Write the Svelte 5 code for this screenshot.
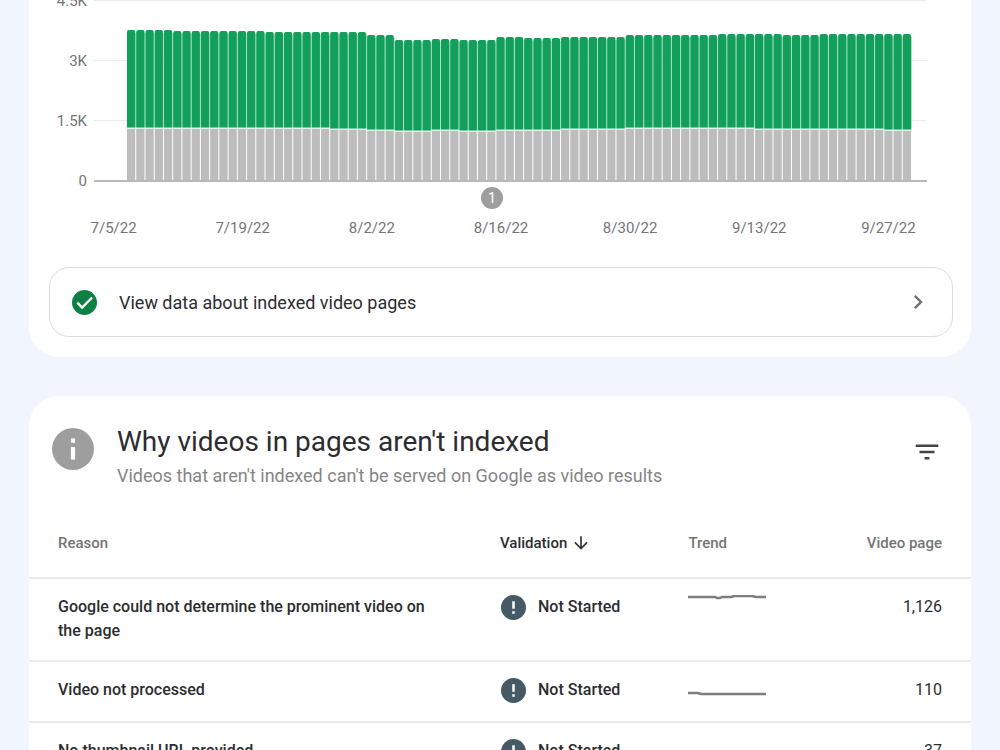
<script lang="ts">
  const plotWidth = 833;
  const plotHeight = 182;
  const baseline = 181;
  const firstBar = 33;
  const barCount = 85;
  const step = 785 / barCount;
  const barWidth = step - 1;

  // [first day, y] pairs, the value holds until the next entry
  const tops = [
    [0, 30], [5, 31], [15, 32], [26, 35], [29, 40], [33, 39], [36, 40],
    [40, 37], [43, 38], [47, 37], [54, 35], [64, 34], [71, 35], [75, 34]
  ];
  const splits = [
    [0, 128], [22, 129], [26, 130], [29, 131], [33, 130], [36, 131],
    [40, 130], [47, 129], [54, 128], [68, 129], [82, 130]
  ];

  function valueAt(steps: number[][], day: number) {
    let y = steps[0][1];
    for (const [start, value] of steps) {
      if (day >= start) y = value;
    }
    return y;
  }

  // bar with its two upper corners rounded
  function barPath(x: number, top: number, bottom: number) {
    const r = 2;
    return `M${x} ${bottom}V${top + r}q0 ${-r} ${r} ${-r}h${barWidth - 2 * r}q${r} 0 ${r} ${r}V${bottom}z`;
  }

  const bars = Array.from({ length: barCount }, (_, i) => ({
    x: firstBar + i * step,
    top: valueAt(tops, i),
    split: valueAt(splits, i)
  }));

  const yLabels = ['4.5K', '3K', '1.5K', '0'];
  const dates = ['7/5/22', '7/19/22', '8/2/22', '8/16/22', '8/30/22', '9/13/22', '9/27/22'];
  const events = [{ label: '1', x: 398 }];

  let sortDown = $state(true);

  const rows = [
    {
      reason: 'Google could not determine the prominent video on the page',
      pages: 1126,
      trend: '0,2 27,2 29,3 32,3 34,2 43,2 46,1 64,1 68,2 78,2'
    },
    { reason: 'Video not processed', pages: 110, trend: '0,15 10,15 13,16 78,16' },
    { reason: 'No thumbnail URL provided', pages: 37, trend: '0,20 78,20' }
  ];
</script>

<main>
  <section class="card chart-card">
    <div class="chart">
      <div class="y-axis">
        {#each yLabels as label}
          <span>{label}</span>
        {/each}
      </div>
      <div class="plot">
        <svg
          class="bars"
          viewBox="0 0 {plotWidth} {plotHeight}"
          preserveAspectRatio="none"
          role="img"
          aria-label="Video pages by day"
        >
          {#each [0, 60, 120] as y}
            <rect x="0" {y} width={plotWidth} height="1" fill="#ebebeb" />
          {/each}
          {#each bars as bar}
            <rect x={bar.x} y={bar.top + 3} width={step} height={bar.split - bar.top - 4} fill="#a9e3c6" />
            <rect x={bar.x} y={bar.split - 1} width={step} height="2" fill="#d9f4e6" />
            <path d={barPath(bar.x, bar.top, bar.split - 0.5)} fill="#129e5b" />
            <rect x={bar.x} y={bar.split + 1} width={barWidth} height={baseline - bar.split - 1} fill="#bdbdbd" />
          {/each}
          <rect x="0" y="180" width={plotWidth} height="2" fill="#b8b8b8" />
        </svg>
        <div class="events">
          {#each events as event}
            <button class="event" style="left: {(event.x / plotWidth) * 100}%">{event.label}</button>
          {/each}
        </div>
      </div>
    </div>

    <div class="x-axis">
      {#each dates as date}
        <span>{date}</span>
      {/each}
    </div>

    <button class="view-data">
      <svg width="25" height="25" viewBox="2 2 20 20" aria-hidden="true">
        <circle cx="12" cy="12" r="10" fill="#0f8043" />
        <path d="M6.2 12.1l3.9 3.9 8-8" fill="none" stroke="#fff" stroke-width="1.9" />
      </svg>
      <span>View data about indexed video pages</span>
      <svg width="28" height="28" viewBox="0 0 24 24" aria-hidden="true">
        <path d="M10 6L8.59 7.41 13.17 12l-4.58 4.59L10 18l6-6z" fill="#707070" />
      </svg>
    </button>
  </section>

  <section class="card">
    <header>
      <svg class="info" width="42" height="42" viewBox="2 2 20 20" aria-hidden="true">
        <circle cx="12" cy="12" r="10" fill="#9e9e9e" />
        <path d="M11 7h2v2h-2zM11 11h2v6h-2z" fill="#fff" />
      </svg>
      <div class="heading">
        <h2>Why videos in pages aren't indexed</h2>
        <p>Videos that aren't indexed can't be served on Google as video results</p>
      </div>
      <button class="filter" aria-label="Filter rows">
        <svg width="30" height="30" viewBox="0 0 24 24" aria-hidden="true">
          <path d="M10 18h4v-2h-4v2zM3 6v2h18V6H3zm3 7h12v-2H6v2z" fill="#444" />
        </svg>
      </button>
    </header>

    <table>
      <thead>
        <tr>
          <th class="reason">Reason</th>
          <th class="validation">
            <button class="sort" onclick={() => (sortDown = !sortDown)}>
              Validation
              <svg class:up={!sortDown} width="20" height="20" viewBox="0 0 24 24" aria-hidden="true">
                <path d="M20 12l-1.41-1.41L13 16.17V4h-2v12.17l-5.58-5.59L4 12l8 8 8-8z" fill="#333" />
              </svg>
            </button>
          </th>
          <th class="trend">Trend</th>
          <th class="pages">Video page</th>
        </tr>
      </thead>
      <tbody>
        {#each rows as row}
          <tr>
            <td class="reason">{row.reason}</td>
            <td class="validation">
              <div class="status">
                <svg width="25" height="25" viewBox="2 2 20 20" aria-hidden="true">
                  <circle cx="12" cy="12" r="10" fill="#455a64" />
                  <path d="M11 7h2v6h-2zM11 15h2v2h-2z" fill="#fff" />
                </svg>
                Not Started
              </div>
            </td>
            <td class="trend">
              <svg width="79" height="24" viewBox="0 0 79 24" aria-hidden="true">
                <polyline points={row.trend} fill="none" stroke="#7d7d7d" stroke-width="2.5" />
              </svg>
            </td>
            <td class="pages">{row.pages.toLocaleString('en-US')}</td>
          </tr>
        {/each}
      </tbody>
    </table>
  </section>
</main>

<style>
  :global(body) {
    background: #f1f5fe;
    color: #2b2d30;
    font-family: Roboto, 'Liberation Sans', sans-serif;
  }

  main {
    display: flex;
    flex-direction: column;
    gap: 39px;
    padding: 0 29px;
    height: 100vh;
    overflow: hidden;
  }

  button {
    border: 0;
    padding: 0;
    background: none;
    color: inherit;
    font: inherit;
    cursor: pointer;
  }

  svg {
    display: block;
    flex: none;
  }

  .card {
    flex: none;
    background: #fff;
    border-radius: 30px;
  }

  .chart-card {
    padding: 0 18px 20px 20px;
    border-top-left-radius: 0;
    border-top-right-radius: 0;
  }

  .chart {
    display: flex;
    padding-right: 26px;
  }

  .y-axis {
    display: flex;
    flex-direction: column;
    flex: none;
    width: 38px;
    margin-top: -29px;
    padding-right: 7px;
    color: #757575;
    font-size: 15px;
    line-height: 60px;
    text-align: right;
  }

  .plot {
    flex: 1;
  }

  .bars {
    width: 100%;
    height: 182px;
  }

  .events {
    position: relative;
    height: 22px;
    margin-top: 5px;
  }

  .event {
    position: absolute;
    transform: translateX(-50%);
    width: 22px;
    height: 22px;
    border-radius: 50%;
    background: #9e9e9e;
    color: #fff;
    font-size: 15px;
    line-height: 22px;
  }

  .x-axis {
    display: flex;
    margin-top: 5px;
    color: #757575;
    font-size: 15px;
    line-height: 24px;
  }

  .x-axis span {
    flex: 1;
    text-align: center;
  }

  .view-data {
    display: flex;
    align-items: center;
    box-sizing: border-box;
    width: 100%;
    height: 70px;
    margin-top: 27px;
    padding: 0 20px 0 22px;
    border: 1px solid #dcdcdc;
    border-radius: 20px;
    font-size: 18px;
    text-align: left;
  }

  .view-data span {
    flex: 1;
    margin-left: 22px;
  }

  header {
    display: flex;
    align-items: flex-start;
    padding: 26px 29px 0 23px;
  }

  .info {
    margin-top: 6px;
  }

  .heading {
    flex: 1;
    margin-left: 23px;
  }

  h2 {
    margin: 0;
    font-size: 28px;
    font-weight: 400;
    line-height: 40px;
  }

  p {
    margin: 2px 0 0;
    color: #858585;
    font-size: 18px;
    line-height: 24px;
  }

  .filter {
    margin-top: 15px;
  }

  table {
    width: 100%;
    table-layout: fixed;
    border-collapse: separate;
    border-spacing: 0;
    margin-top: 21px;
  }

  th,
  td {
    box-sizing: border-box;
    padding: 16px 0 17px;
    border-bottom: 2px solid #ebebeb;
    text-align: left;
    vertical-align: top;
  }

  th {
    height: 70px;
    padding: 22px 0;
    color: #757575;
    font-size: 15px;
    font-weight: 500;
    line-height: 24px;
  }

  td {
    height: 61px;
    font-size: 16px;
    font-weight: 500;
    line-height: 24px;
  }

  .reason {
    width: 50%;
    padding-left: 29px;
    padding-right: 60px;
  }

  .validation {
    width: 20%;
  }

  .trend {
    width: 13%;
  }

  .pages {
    padding-right: 29px;
    text-align: right;
  }

  td.pages {
    font-weight: 400;
  }

  .sort {
    display: flex;
    align-items: center;
    gap: 4px;
    color: #2b2d30;
  }

  .sort .up {
    transform: rotate(180deg);
  }

  .status {
    display: flex;
    align-items: center;
    gap: 12px;
    height: 24px;
    padding-left: 1px;
  }
</style>
